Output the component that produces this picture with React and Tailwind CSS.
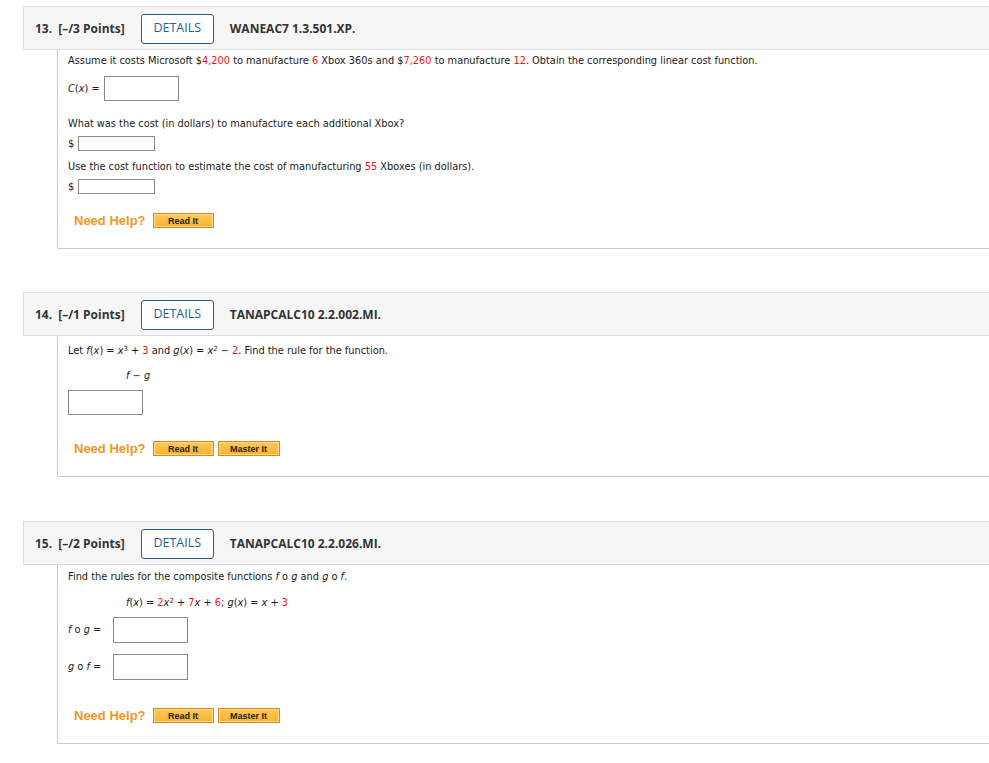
import React from 'react';

const body = { fontFamily: '"DejaVu Sans", Verdana, sans-serif' };

function Red({ children }) {
  return <span className="text-[#f01010]">{children}</span>;
}

function V({ children }) {
  return <i>{children}</i>;
}

function Header({ num, points, code }) {
  return (
    <div
      className="h-[44px] flex items-center pl-[11px] pt-[1px] bg-[#f6f6f6] border-t border-l border-b border-[#dddddd] text-[#333333]"
      style={{ fontFamily: '"Open Sans", sans-serif' }}
    >
      <span className="text-[12px] font-bold">{num}</span>
      <span className="text-[12px] font-bold ml-[6px]">[–/{points} Points]</span>
      <button className="ml-[16px] w-[73px] h-[30px] rounded-[3px] border border-[#1f5f93] text-[#1f5f93] text-[12.5px] bg-white">
        DETAILS
      </button>
      <span className="ml-[16px] text-[12px] font-bold">{code}</span>
    </div>
  );
}

function HelpButton({ label, w }) {
  return (
    <div
      className={`h-[15px] ${w} border border-[#dd8620] bg-gradient-to-b from-[#ffcb55] to-[#fbb12f] shadow-[inset_0_0_0_1px_#ffd98a] flex items-center justify-center text-[9px] font-bold text-[#222222]`}
      style={{ fontFamily: '"Liberation Sans", Arial, sans-serif' }}
    >
      {label}
    </div>
  );
}

function NeedHelp({ master, className }) {
  return (
    <div className={`flex items-center h-[15px] ml-[6px] ${className}`}>
      <span
        className="text-[13px] font-bold text-[#f7941e] mr-[7px]"
        style={{ fontFamily: '"Liberation Sans", Arial, sans-serif' }}
      >
        Need Help?
      </span>
      <HelpButton label="Read It" w="w-[61px]" />
      {master && (
        <div className="ml-[4px]">
          <HelpButton label="Master It" w="w-[62px]" />
        </div>
      )}
    </div>
  );
}

function Box({ children }) {
  return (
    <div
      className="ml-[34px] border-l border-b border-[#cccccc] pl-[10px] pb-[20px] text-[9.8px] leading-[14px] text-[#1a1a1a]"
      style={body}
    >
      {children}
    </div>
  );
}

function Input({ className }) {
  return <div className={`border border-[#8a8a8a] bg-white ${className}`} />;
}

export default function App() {
  return (
    <div className="min-h-screen bg-white pt-[6px] pl-[23px]">
      {/* 13 */}
      <Header num="13." points="3" code="WANEAC7 1.3.501.XP." />
      <Box>
        <div className="pt-[4px] h-[18px]">
          Assume it costs Microsoft $<Red>4,200</Red> to manufacture <Red>6</Red> Xbox 360s and $
          <Red>7,260</Red> to manufacture <Red>12</Red>. Obtain the corresponding linear cost function.
        </div>
        <div className="mt-[8px] flex items-center">
          <span className="w-[36px]">
            <V>C</V>(<V>x</V>) =
          </span>
          <Input className="w-[75px] h-[25px]" />
        </div>
        <div className="mt-[16px]">What was the cost (in dollars) to manufacture each additional Xbox?</div>
        <div className="mt-[5px] flex items-center">
          <span className="w-[10px]">$</span>
          <Input className="w-[77px] h-[15px]" />
        </div>
        <div className="mt-[9px]">
          Use the cost function to estimate the cost of manufacturing <Red>55</Red> Xboxes (in dollars).
        </div>
        <div className="mt-[5px] flex items-center">
          <span className="w-[10px]">$</span>
          <Input className="w-[77px] h-[15px]" />
        </div>
        <NeedHelp className="mt-[19px]" />
      </Box>

      {/* 14 */}
      <div className="mt-[43px]">
        <Header num="14." points="1" code="TANAPCALC10 2.2.002.MI." />
      </div>
      <Box>
        <div className="pt-[8px] h-[22px]">
          Let <V>f</V>(<V>x</V>) = <V>x</V>
          <sup className="text-[7px]">3</sup> + <Red>3</Red> and <V>g</V>(<V>x</V>) = <V>x</V>
          <sup className="text-[7px]">2</sup> − <Red>2</Red>. Find the rule for the function.
        </div>
        <div className="mt-[11px] ml-[58px]">
          <V>f</V> − <V>g</V>
        </div>
        <Input className="mt-[7px] w-[75px] h-[25px]" />
        <NeedHelp master className="mt-[26px]" />
      </Box>

      {/* 15 */}
      <div className="mt-[44px]">
        <Header num="15." points="2" code="TANAPCALC10 2.2.026.MI." />
      </div>
      <Box>
        <div className="pt-[5px] h-[19px]">
          Find the rules for the composite functions <V>f</V> ο <V>g</V> and <V>g</V> ο <V>f</V>.
        </div>
        <div className="mt-[12px] ml-[58px]">
          <V>f</V>(<V>x</V>) = <Red>2</Red>
          <V>x</V>
          <sup className="text-[7px]">2</sup> + <Red>7</Red>
          <V>x</V> + <Red>6</Red>; <V>g</V>(<V>x</V>) = <V>x</V> + <Red>3</Red>
        </div>
        <div className="mt-[7px] flex items-center">
          <span className="w-[45px]">
            <V>f</V> ο <V>g</V> =
          </span>
          <Input className="w-[75px] h-[26px]" />
        </div>
        <div className="mt-[11px] flex items-center">
          <span className="w-[45px]">
            <V>g</V> ο <V>f</V> =
          </span>
          <Input className="w-[75px] h-[26px]" />
        </div>
        <NeedHelp master className="mt-[28px]" />
      </Box>
    </div>
  );
}
